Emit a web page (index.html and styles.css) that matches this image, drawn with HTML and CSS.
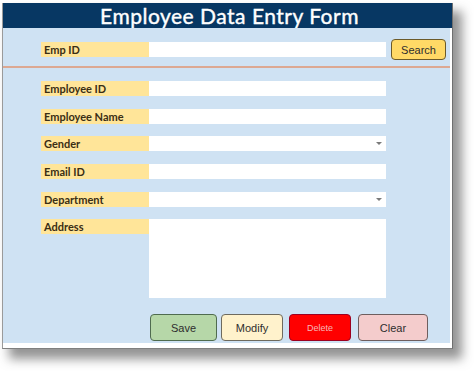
FILE: index.html
```html
<!DOCTYPE html>
<html>
<head>
<meta charset="utf-8">
<link rel="stylesheet" href="styles.css">
</head>
<body>
<div class="page">
<div class="window">
  <div class="header">Employee Data Entry Form</div>
  <div class="panel">
    <div class="search-row">
      <div class="label">Emp ID</div>
      <div class="input"></div>
      <button class="btn btn-search">Search</button>
    </div>
    <div class="divider"></div>
    <div class="fields">
      <div class="field"><div class="label">Employee ID</div><div class="input"></div></div>
      <div class="field"><div class="label">Employee Name</div><div class="input"></div></div>
      <div class="field"><div class="label">Gender</div><div class="input select"><span class="arrow"></span></div></div>
      <div class="field"><div class="label">Email ID</div><div class="input"></div></div>
      <div class="field"><div class="label">Department</div><div class="input select"><span class="arrow"></span></div></div>
      <div class="field"><div class="label">Address</div><div class="input area"></div></div>
    </div>
    <div class="actions">
      <button class="btn btn-save">Save</button>
      <button class="btn btn-modify">Modify</button>
      <button class="btn btn-delete">Delete</button>
      <button class="btn btn-clear">Clear</button>
    </div>
  </div>
</div>
</div>
</body>
</html>
```
FILE: styles.css
```css
* { box-sizing: border-box; }
html, body {
  margin: 0;
  width: 474px;
  height: 371px;
  background: #ffffff;
  overflow: hidden;
}
body {
  font-family: "Lato", "Liberation Sans", sans-serif;
}
.page {
  width: 474px;
  height: 371px;
  padding: 3px 0 0 2px;
}
.window {
  width: 451px;
  height: 346px;
  background: #ffffff;
  border-left: 1px solid #9a9a9a;
  border-right: 1px solid #6f6f6f;
  border-bottom: 1px solid #7f7f7f;
  box-shadow: 8px 9px 10px 1px rgba(60, 60, 60, 0.55);
  display: flex;
  flex-direction: column;
}
.header {
  height: 25px;
  background: #073763;
  color: #ffffff;
  font-size: 21px;
  font-weight: 400;
  letter-spacing: 0.5px;
  line-height: 25px;
  text-align: center;
  padding-left: 4px;
  -webkit-text-stroke: 0.4px #ffffff;
}
.panel {
  width: 447px;
  height: 315px;
  background: #cfe2f3;
  display: flex;
  flex-direction: column;
}
.search-row {
  display: flex;
  align-items: center;
  padding-left: 38px;
  margin-top: 11px;
  height: 21px;
}
.label {
  width: 108px;
  height: 15px;
  background: #ffe599;
  color: #3a2e14;
  font-size: 11px;
  font-weight: 700;
  line-height: 15px;
  padding-left: 3px;
  white-space: nowrap;
}
.input {
  width: 237px;
  height: 15px;
  background: #ffffff;
  position: relative;
}
.select .arrow {
  position: absolute;
  right: 4px;
  top: 6px;
  width: 0;
  height: 0;
  border-left: 3px solid transparent;
  border-right: 3px solid transparent;
  border-top: 3px solid #7a7a7a;
}
.input.area {
  height: 79px;
}
.btn {
  font-family: "Liberation Sans", Arial, sans-serif;
  font-size: 11px;
  color: #2e2e2e;
  border: 1px solid #5b5b5b;
  border-radius: 4px;
  padding: 0;
  cursor: pointer;
}
.btn-search {
  margin-left: 5px;
  width: 55px;
  height: 21px;
  background: #ffd966;
  border-color: #6b5a2a;
}
.divider {
  height: 2px;
  background: #dca892;
  margin-top: 6px;
}
.fields {
  display: flex;
  flex-direction: column;
  gap: 12.7px;
  padding-left: 38px;
  margin-top: 13px;
}
.field {
  display: flex;
  align-items: flex-start;
}
.actions {
  display: flex;
  padding-left: 147px;
  margin-top: 16px;
}
.actions .btn {
  height: 27px;
}
.btn-save {
  width: 67px;
  background: #b6d7a8;
  border-color: #4f6b4f;
}
.btn-modify {
  width: 62px;
  margin-left: 4px;
  background: #fff2cc;
  border-color: #6e6a5e;
}
.btn-delete {
  width: 62px;
  margin-left: 6px;
  background: #ff0000;
  border-color: #9c0020;
  color: #f6b8b8;
  font-size: 9px;
}
.btn-clear {
  width: 70px;
  margin-left: 7px;
  background: #f4cccc;
  border-color: #6e5e5e;
}
```
